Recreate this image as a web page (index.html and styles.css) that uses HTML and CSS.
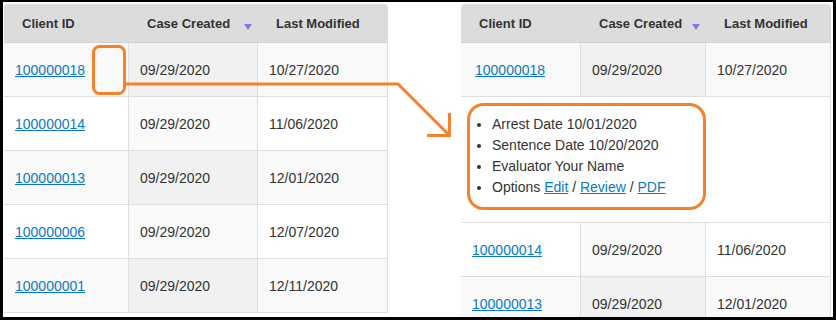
FILE: index.html
```html
<!DOCTYPE html>
<html>
<head>
<meta charset="utf-8">
<link rel="stylesheet" href="styles.css">
</head>
<body>
<div class="frame">
  <div class="grid grid-left">
    <div class="th">Client ID</div>
    <div class="th">Case Created <span class="sort"></span></div>
    <div class="th">Last Modified</div>

    <div class="td odd"><a href="#">100000018</a></div>
    <div class="td odd sorted">09/29/2020</div>
    <div class="td odd">10/27/2020</div>

    <div class="td"><a href="#">100000014</a></div>
    <div class="td sorted">09/29/2020</div>
    <div class="td">11/06/2020</div>

    <div class="td odd"><a href="#">100000013</a></div>
    <div class="td odd sorted">09/29/2020</div>
    <div class="td odd">12/01/2020</div>

    <div class="td"><a href="#">100000006</a></div>
    <div class="td sorted">09/29/2020</div>
    <div class="td">12/07/2020</div>

    <div class="td odd"><a href="#">100000001</a></div>
    <div class="td odd sorted">09/29/2020</div>
    <div class="td odd">12/11/2020</div>
  </div>

  <div class="grid grid-right">
    <div class="th">Client ID</div>
    <div class="th">Case Created <span class="sort"></span></div>
    <div class="th">Last Modified</div>

    <div class="td odd indent"><a href="#">100000018</a></div>
    <div class="td odd sorted">09/29/2020</div>
    <div class="td odd">10/27/2020</div>

    <div class="td detail">
      <ul class="details">
        <li>Arrest Date 10/01/2020</li>
        <li>Sentence Date 10/20/2020</li>
        <li>Evaluator Your Name</li>
        <li>Options <a href="#">Edit</a> / <a href="#">Review</a> / <a href="#">PDF</a></li>
      </ul>
    </div>

    <div class="td"><a href="#">100000014</a></div>
    <div class="td sorted">09/29/2020</div>
    <div class="td">11/06/2020</div>

    <div class="td odd"><a href="#">100000013</a></div>
    <div class="td odd sorted">09/29/2020</div>
    <div class="td odd">12/01/2020</div>
  </div>
</div>

<svg class="overlay" width="836" height="320" viewBox="0 0 836 320">
  <rect x="93.5" y="46.5" width="31" height="47" rx="6" ry="6" fill="none" stroke="#f7812a" stroke-width="3"/>
  <polyline points="125,84 398,84 449,135" fill="none" stroke="#f7812a" stroke-width="3"/>
  <polyline points="427,135.5 449.5,135.5 449.5,113" fill="none" stroke="#f7812a" stroke-width="3"/>
  <rect x="468.5" y="104.5" width="236" height="104" rx="15" ry="15" fill="none" stroke="#f7812a" stroke-width="3"/>
</svg>
</body>
</html>
```

FILE: styles.css
```css
html, body {
  margin: 0;
  padding: 0;
  background: #fff;
}

body {
  position: relative;
  width: 836px;
  height: 320px;
  font-family: "Liberation Sans", Arial, sans-serif;
  color: #333;
}

.frame {
  box-sizing: border-box;
  width: 836px;
  height: 320px;
  border: 3px solid #000;
  border-top-width: 2px;
  padding: 2px 0 0 1px;
  display: flex;
  align-items: flex-start;
  gap: 73px;
  overflow: hidden;
  background: #fff;
}

.grid {
  display: grid;
  flex: none;
}

.grid-left {
  width: 384px;
  grid-template-columns: 125px 129px 130px;
}

.grid-right {
  width: 370px;
  grid-template-columns: 120px 125px 125px;
}

.th {
  box-sizing: border-box;
  height: 39px;
  background: #dcdcdc;
  font-weight: bold;
  font-size: 13px;
  display: flex;
  align-items: center;
  padding: 0 6px 0 18px;
  border-bottom: 1px solid #d2d2d2;
}

.th:first-child {
  border-top-left-radius: 4px;
}

.th:nth-child(3) {
  border-top-right-radius: 4px;
}

.sort {
  margin-left: auto;
  margin-top: 7px;
  width: 0;
  height: 0;
  border-left: 4px solid transparent;
  border-right: 4px solid transparent;
  border-top: 6px solid #7b7de0;
}

.td {
  box-sizing: border-box;
  height: 54px;
  display: flex;
  align-items: center;
  padding: 0 11px;
  font-size: 14px;
  background: #fff;
  border-right: 1px solid #dedede;
  border-bottom: 1px solid #dedede;
}

.td.sorted {
  background: #fafafa;
}

.td.odd {
  background: #f9f9f9;
}

.td.odd.sorted {
  background: #f1f1f1;
}

.td.indent {
  padding-left: 14px;
}

.td.detail {
  grid-column: 1 / -1;
  height: 126px;
  align-items: flex-start;
  padding: 0 11px;
  background: #fff;
}

.details {
  margin: 17px 0 0 0;
  padding: 0 0 0 20px;
  list-style: disc;
}

.details li {
  line-height: 21px;
  font-size: 14px;
}

a {
  color: #0b79c2;
  text-decoration: underline;
}

.overlay {
  position: absolute;
  left: 0;
  top: 0;
  pointer-events: none;
}
```
